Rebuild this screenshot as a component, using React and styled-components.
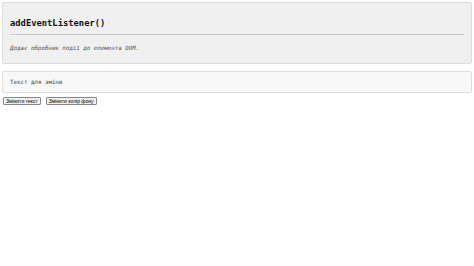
import React from 'react';
import styled, { createGlobalStyle } from 'styled-components';

const GlobalStyle = createGlobalStyle`
  body {
    margin: 2px;
    background: #fff;
    font-family: "DejaVu Sans Mono", monospace;
  }
`;

const Panel = styled.div`
  background: ${(p) => (p.$light ? '#f8f8f8' : '#f0f0f0')};
  border: 1px solid #dcdcdc;
  border-radius: 2px;
  padding: ${(p) => p.$pad || '7px'};
  margin-bottom: ${(p) => p.$gap || '7px'};
`;

const Title = styled.h1`
  margin: 8px 0 5px;
  font-family: "DejaVu Sans Mono", monospace;
  font-size: 8.8px;
  line-height: 11px;
  font-weight: bold;
  color: #111;
`;

const Rule = styled.hr`
  border: none;
  border-top: 1px solid #c8c8c8;
  margin: 0 0 10px;
`;

const Note = styled.p`
  margin: 0 0 4px;
  font-size: 5.8px;
  line-height: 7px;
  font-style: italic;
  color: #555;
`;

const Target = styled.p`
  margin: 0;
  font-size: 5.8px;
  line-height: 7px;
  color: #444;
`;

const Buttons = styled.div`
  display: flex;
  gap: 5px;
  padding-left: 1px;
`;

const Button = styled.button`
  font-family: "Liberation Sans", Arial, sans-serif;
  font-size: 5px;
  line-height: 6px;
  padding: 0 2px;
  background: #efefef;
  border: 1px solid #888;
  border-radius: 1px;
  color: #000;
`;

export default function App() {
  return (
    <>
      <GlobalStyle />
      <Panel>
        <Title>addEventListener()</Title>
        <Rule />
        <Note>Додає обробник події до елемента DOM.</Note>
      </Panel>
      <Panel $light $pad="7px 7px 6px" $gap="4px">
        <Target>Текст для зміни</Target>
      </Panel>
      <Buttons>
        <Button>Змінити текст</Button>
        <Button>Змінити колір фону</Button>
      </Buttons>
    </>
  );
}
